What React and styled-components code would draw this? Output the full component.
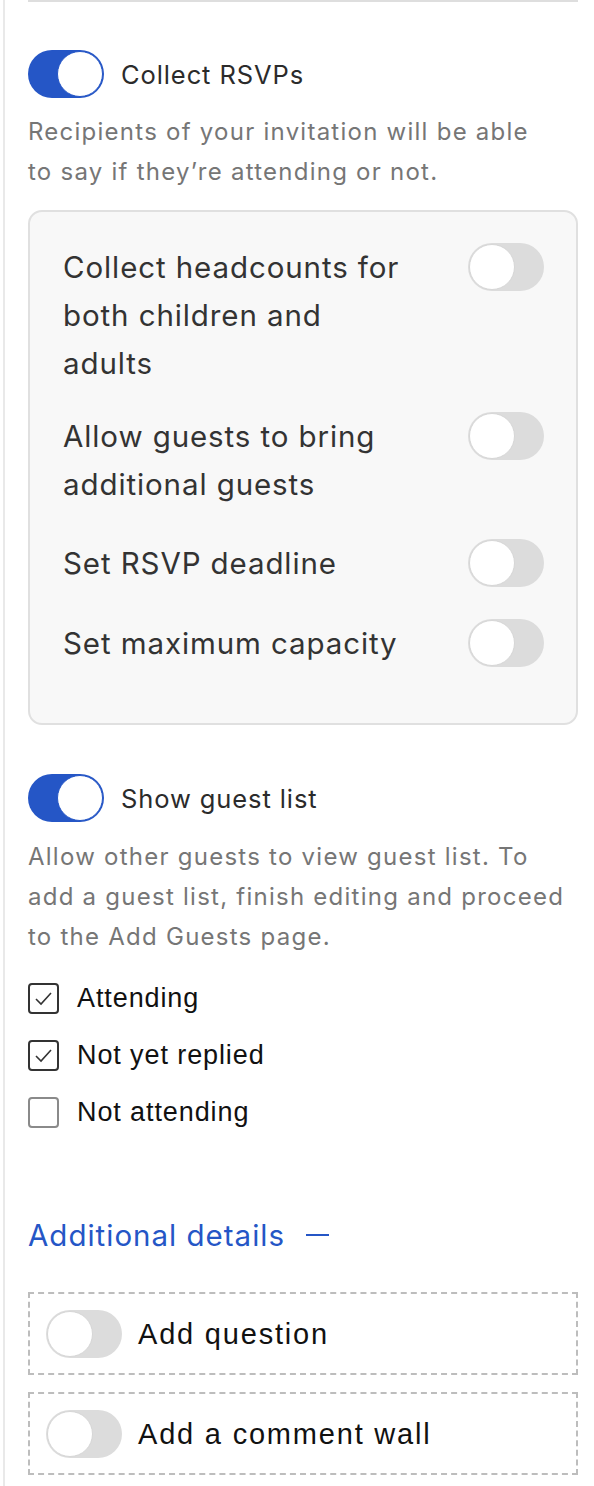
import React, { useState } from 'react';
import styled, { createGlobalStyle } from 'styled-components';

const GlobalStyle = createGlobalStyle`
  body {
    margin: 0;
    background: #fff;
    font-family: Inter, "Liberation Sans", sans-serif;
  }
`;

const Page = styled.div`
  padding-left: 3px;
`;

const Column = styled.div`
  box-sizing: border-box;
  min-height: 100vh;
  border-left: 2px solid #e9e9e9;
  padding: 0 16px 12px 23px;
  display: flex;
  flex-direction: column;
`;

const TopRule = styled.div`
  height: 2px;
  background: #dedede;
`;

const SwitchRow = styled.div`
  display: flex;
  align-items: center;
  gap: 17px;
  margin-top: ${(p) => p.$top}px;
`;

const Track = styled.button`
  position: relative;
  flex: none;
  width: 76px;
  height: 48px;
  padding: 0;
  border: none;
  border-radius: 24px;
  background: ${(p) => (p.$on ? '#2556c6' : '#dcdcdc')};
  cursor: pointer;
`;

const Knob = styled.span`
  position: absolute;
  top: 1px;
  left: ${(p) => (p.$on ? '29px' : '1px')};
  width: 46px;
  height: 46px;
  box-sizing: border-box;
  border-radius: 50%;
  background: #fff;
  border: 1.5px solid ${(p) => (p.$on ? '#2556c6' : '#d6d6d6')};
`;

const SwitchLabel = styled.span`
  font-size: 25.5px;
  letter-spacing: 0.9px;
  color: #2b2b2b;
`;

const Help = styled.p`
  margin: ${(p) => p.$top}px 0 0;
  max-width: ${(p) => p.$max};
  font-size: 24px;
  letter-spacing: 1.25px;
  line-height: 40px;
  color: #767676;
`;

const Panel = styled.div`
  margin-top: 18px;
  background: #f8f8f8;
  border: 2px solid #e0e0e0;
  border-radius: 14px;
  padding: 31px 32px 56px 33px;
  display: flex;
  flex-direction: column;
`;

const PanelRow = styled.div`
  display: flex;
  justify-content: space-between;
  align-items: flex-start;
  gap: 20px;
  margin-top: ${(p) => p.$top || 0}px;
`;

const PanelText = styled.span`
  font-size: 29.5px;
  letter-spacing: 0.9px;
  line-height: 48px;
  color: #333;
  max-width: 345px;
`;

const Checks = styled.div`
  margin-top: 21px;
  display: flex;
  flex-direction: column;
  gap: 17px;
`;

const CheckRow = styled.label`
  display: flex;
  align-items: center;
  gap: 18px;
  height: 40px;
  cursor: pointer;
`;

const Box = styled.span`
  width: 31px;
  height: 31px;
  box-sizing: border-box;
  border: 2px solid ${(p) => (p.$checked ? '#333' : '#8a8a8a')};
  border-radius: 4px;
  display: flex;
  align-items: center;
  justify-content: center;
  background: #fff;
`;

const CheckText = styled.span`
  font-family: "Liberation Sans", Arial, sans-serif;
  font-size: 27px;
  letter-spacing: 0.9px;
  color: #111;
`;

const DetailsToggle = styled.div`
  margin-top: 83px;
  display: flex;
  align-items: center;
  height: 40px;
  font-size: 29.5px;
  letter-spacing: 1px;
  color: #2556c6;
`;

const Dash = styled.span`
  width: 23px;
  height: 2px;
  background: #2556c6;
  margin-left: 21px;
`;

const AddBox = styled.div`
  margin-top: ${(p) => p.$top}px;
  border: 2px dashed #bdbdbd;
  padding: 16px 16px 15px;
  display: flex;
  align-items: center;
  gap: 16px;
`;

const AddText = styled.span`
  font-family: "Liberation Sans", Arial, sans-serif;
  font-size: 29px;
  letter-spacing: 1.8px;
  color: #111;
`;

const Switch = ({ on, onClick }) => (
  <Track $on={on} onClick={onClick}>
    <Knob $on={on} />
  </Track>
);

const Check = () => (
  <svg width="19" height="15" viewBox="0 0 19 15">
    <polyline points="2,8 7,13 17,2" fill="none" stroke="#333" strokeWidth="1.6" />
  </svg>
);

const panelRows = [
  { text: 'Collect headcounts for both children and adults', top: 0 },
  { text: 'Allow guests to bring additional guests', top: 25 },
  { text: 'Set RSVP deadline', top: 31 },
  { text: 'Set maximum capacity', top: 32 },
];

const App = () => {
  const [rsvp, setRsvp] = useState(true);
  const [guestList, setGuestList] = useState(true);
  const [checks, setChecks] = useState([true, true, false]);
  const labels = ['Attending', 'Not yet replied', 'Not attending'];

  return (
    <Page>
      <GlobalStyle />
      <Column>
        <TopRule />
        <SwitchRow $top={48}>
          <Switch on={rsvp} onClick={() => setRsvp(!rsvp)} />
          <SwitchLabel>Collect RSVPs</SwitchLabel>
        </SwitchRow>
        <Help $top={14} $max="520px">
          Recipients of your invitation will be able to say if they’re attending or not.
        </Help>
        <Panel>
          {panelRows.map((row) => (
            <PanelRow key={row.text} $top={row.top}>
              <PanelText>{row.text}</PanelText>
              <Switch on={false} />
            </PanelRow>
          ))}
        </Panel>
        <SwitchRow $top={49}>
          <Switch on={guestList} onClick={() => setGuestList(!guestList)} />
          <SwitchLabel>Show guest list</SwitchLabel>
        </SwitchRow>
        <Help $top={15} $max="545px">
          Allow other guests to view guest list. To add a guest list, finish editing and proceed
          to the Add Guests page.
        </Help>
        <Checks>
          {labels.map((label, i) => (
            <CheckRow
              key={label}
              onClick={() => setChecks(checks.map((c, j) => (j === i ? !c : c)))}
            >
              <Box $checked={checks[i]}>{checks[i] && <Check />}</Box>
              <CheckText>{label}</CheckText>
            </CheckRow>
          ))}
        </Checks>
        <DetailsToggle>
          Additional details
          <Dash />
        </DetailsToggle>
        <AddBox $top={37}>
          <Switch on={false} />
          <AddText>Add question</AddText>
        </AddBox>
        <AddBox $top={17}>
          <Switch on={false} />
          <AddText>Add a comment wall</AddText>
        </AddBox>
      </Column>
    </Page>
  );
};

export default App;
